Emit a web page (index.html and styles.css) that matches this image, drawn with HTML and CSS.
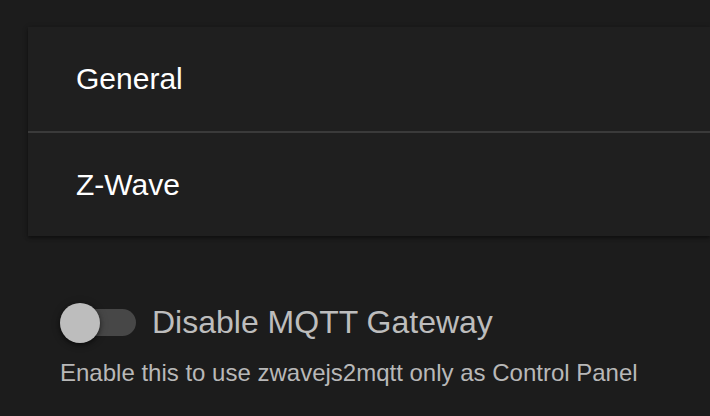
FILE: index.html
```
<!DOCTYPE html>
<html lang="en">
<head>
<meta charset="utf-8">
<title>Settings</title>
<link rel="stylesheet" href="styles.css">
</head>
<body>
<main class="page">
  <section class="card">
    <div class="card-row">General</div>
    <div class="divider"></div>
    <div class="card-row card-row--last">Z-Wave</div>
  </section>
  <section class="options">
    <label class="switch-row">
      <span class="switch">
        <span class="switch-track"></span>
        <span class="switch-thumb"></span>
      </span>
      <span class="switch-label">Disable MQTT Gateway</span>
    </label>
    <p class="hint">Enable this to use zwavejs2mqtt only as Control Panel</p>
  </section>
</main>
</body>
</html>
```
FILE: styles.css
```
html, body {
  margin: 0;
  padding: 0;
  background: #1c1c1c;
  overflow: hidden;
  font-family: "Liberation Sans", Arial, Helvetica, sans-serif;
}

.page {
  width: 710px;
  height: 416px;
  padding-top: 27px;
  box-sizing: border-box;
}

.card {
  margin-left: 28px;
  background: #1f1f1f;
  box-shadow: 0 2px 3px rgba(0, 0, 0, 0.35), 0 1px 6px rgba(0, 0, 0, 0.2);
}

.card-row {
  height: 104px;
  display: flex;
  align-items: center;
  padding-left: 48px;
  color: #ffffff;
  font-size: 30px;
  line-height: 30px;
}

.card-row--last {
  height: 103px;
}

.divider {
  height: 2px;
  background: #3a3a3a;
}

.options {
  padding-left: 60px;
  margin-top: 67px;
}

.switch-row {
  display: flex;
  align-items: center;
  gap: 16px;
  height: 40px;
}

.switch {
  position: relative;
  width: 76px;
  height: 40px;
  flex: none;
}

.switch-track {
  position: absolute;
  left: 0;
  top: 6px;
  width: 76px;
  height: 27px;
  border-radius: 14px;
  background: #474747;
}

.switch-thumb {
  position: absolute;
  left: 0;
  top: 0;
  width: 40px;
  height: 40px;
  border-radius: 50%;
  background: #bdbdbd;
  box-shadow: 0 2px 4px rgba(0, 0, 0, 0.45), 0 1px 8px rgba(0, 0, 0, 0.25);
}

.switch-label {
  color: #bdbdbd;
  font-size: 32px;
  line-height: 32px;
  margin-top: -3px;
}

.hint {
  margin: 18px 0 0 0;
  color: #b8b8b8;
  font-size: 24px;
  line-height: 24px;
}
```
